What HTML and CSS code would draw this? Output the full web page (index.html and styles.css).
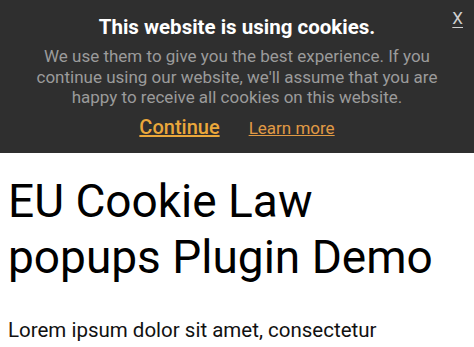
FILE: index.html
```html
<!DOCTYPE html>
<html lang="en">
	<head>
		<meta charset="UTF-8" />
		<meta name="viewport" content="width=device-width, initial-scale=1.0" />
		<title>EU Cookie Law popups Plugin Demo</title>
		<link rel="stylesheet" href="styles.css">
	</head>

	<body>
		<div class="cookie-bar">
			<a class="cookie-close" href="#">X</a>
			<h3 class="cookie-title">This website is using cookies.</h3>
			<p class="cookie-text">We use them to give you the best experience. If you continue using our website, we'll assume that you are happy to receive all cookies on this website.</p>
			<div class="cookie-actions">
				<a class="cookie-continue" href="#">Continue</a>
				<a class="cookie-learn" href="#">Learn more</a>
			</div>
		</div>
		<div class="content">
			<h1>EU Cookie Law popups Plugin Demo</h1>
			<p>Lorem ipsum dolor sit amet, consectetur adipiscing elit, sed do eiusmod tempor incididunt ut labore et dolore magna aliqua.</p>
		</div>
	</body>
</html>
```

FILE: styles.css
```css
html, body {
	margin: 0;
	padding: 0;
	font-family: Roboto, 'Liberation Sans', sans-serif;
	background: #fff;
}

.cookie-bar {
	position: relative;
	background-color: #2f2f2f;
	padding: 15px 20px 14px;
	text-align: center;
}

.cookie-close {
	position: absolute;
	top: 8px;
	right: 11px;
	color: #cfcfcf;
	font-size: 17px;
	line-height: 20px;
	text-decoration: underline;
	text-underline-offset: 3px;
}

.cookie-title {
	margin: 0;
	color: #fff;
	font-size: 20.5px;
	font-weight: 700;
	line-height: 24px;
}

.cookie-text {
	margin: 7px 0 0;
	color: #9b9b9b;
	font-size: 17px;
	line-height: 20.5px;
}

.cookie-actions {
	margin-top: 7px;
	display: flex;
	justify-content: center;
	align-items: baseline;
	gap: 29px;
}

.cookie-continue {
	color: #eaa73b;
	font-size: 20px;
	font-weight: 500;
}

.cookie-learn {
	color: #e09a45;
	font-size: 17px;
}

.content {
	padding: 0 8px;
}

h1 {
	margin: 20px 0 0;
	font-size: 46px;
	font-weight: 400;
	line-height: 56px;
	color: #000;
}

p {
	margin: 30px 0 0;
	font-size: 20.5px;
	line-height: 30px;
	color: #111;
}
```
